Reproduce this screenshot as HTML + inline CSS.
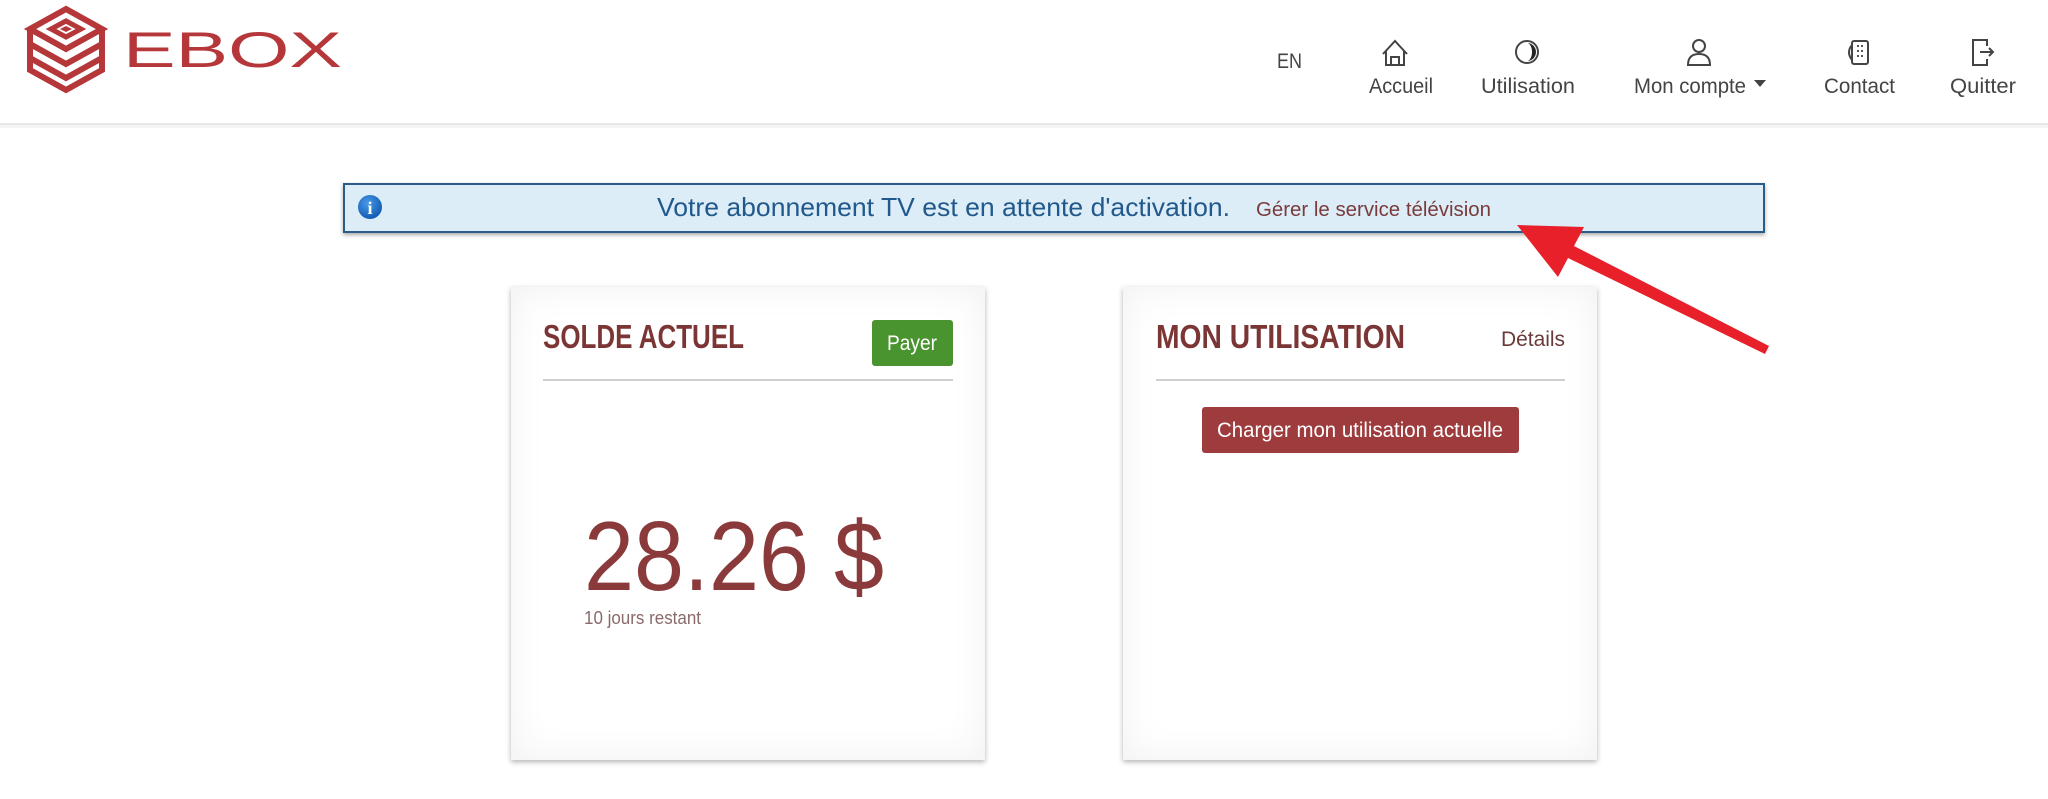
<!DOCTYPE html>
<html><head><meta charset="utf-8"><style>
html,body{margin:0;padding:0;background:#fff;width:2048px;height:799px;overflow:hidden;position:relative}
svg{display:block;position:absolute;left:0;top:0}
text{font-family:"Liberation Sans",sans-serif}
.card{position:absolute;top:287px;width:474px;height:473px;background:#fff;box-shadow:0 2px 5px rgba(0,0,0,.3),inset 0 0 40px rgba(0,0,0,.06)}
</style></head><body>
<div class="card" style="left:511px"></div>
<div class="card" style="left:1123px"></div>
<svg width="2048" height="799" viewBox="0 0 2048 799" xmlns="http://www.w3.org/2000/svg">
<defs>
<filter id="sh" x="-10%" y="-10%" width="120%" height="130%">
<feGaussianBlur in="SourceAlpha" stdDeviation="2"/><feOffset dy="2"/>
<feComponentTransfer><feFuncA type="linear" slope="0.35"/></feComponentTransfer>
<feMerge><feMergeNode/><feMergeNode in="SourceGraphic"/></feMerge></filter>
<radialGradient id="ig" cx="40%" cy="35%" r="70%"><stop offset="0" stop-color="#4a9ae8"/><stop offset="1" stop-color="#0e58b0"/></radialGradient>
</defs>
<!-- header -->
<rect x="0" y="123" width="2048" height="2" fill="#e6e6e6"/>
<rect x="0" y="125" width="2048" height="3" fill="#f4f4f4"/>
<!-- logo -->
<g fill="none" stroke="#b5373a" stroke-width="6" stroke-linejoin="miter">
<polygon points="66,9 102,29 66,49 30,29"/>
<polygon points="66,21 81,29 66,37 51,29" stroke-width="5"/>
<polyline points="30,29 30,44 66,64 102,44 102,29"/>
<polyline points="30,44 30,58 66,78 102,58 102,44"/>
<polyline points="30,58 30,70 66,90 102,70 102,58"/>
</g>
<polygon points="66,26 72,29 66,32 60,29" fill="#b5373a"/>
<text x="123" y="67" font-size="50" fill="#b5373a" textLength="219" lengthAdjust="spacingAndGlyphs">EBOX</text>
<!-- nav -->
<g fill="#444" font-size="21">
<text x="1277" y="68" textLength="25" lengthAdjust="spacingAndGlyphs">EN</text>
<text x="1369" y="93" textLength="64" lengthAdjust="spacingAndGlyphs">Accueil</text>
<text x="1481" y="93" textLength="94" lengthAdjust="spacingAndGlyphs">Utilisation</text>
<text x="1634" y="93" textLength="112" lengthAdjust="spacingAndGlyphs">Mon compte</text>
<text x="1824" y="93" textLength="71" lengthAdjust="spacingAndGlyphs">Contact</text>
<text x="1950" y="93" textLength="66" lengthAdjust="spacingAndGlyphs">Quitter</text>
</g>
<polygon points="1754,80 1766,80 1760,87" fill="#444"/>
<g fill="none" stroke="#444" stroke-width="2">
<path d="M1383,54 L1395,41 L1407,54 M1386,51 V65 H1404 V51 M1391,65 V57 H1399 V65"/>
<circle cx="1527" cy="52" r="11"/>
<circle cx="1699" cy="46" r="6"/>
<path d="M1688,65 Q1688,54 1699,54 Q1710,54 1710,65 Z"/>
<rect x="1852" y="41" width="16" height="23" rx="2"/>
<path d="M1852,45 Q1846,52 1852,60"/>
<path d="M1987,46 V40 H1973 V65 H1987 V59 M1980,52 H1993 M1989,48 L1993,52 L1989,56"/>
</g>
<path d="M1527,43 A9,9 0 0 1 1527,61 A5,9 0 0 0 1527,43 Z" fill="#222"/>
<g fill="#555"><rect x="1857" y="45" width="2" height="2"/><rect x="1861" y="45" width="2" height="2"/><rect x="1857" y="50" width="2" height="2"/><rect x="1861" y="50" width="2" height="2"/><rect x="1857" y="55" width="2" height="2"/><rect x="1861" y="55" width="2" height="2"/></g>
<!-- alert -->
<rect x="344" y="184" width="1420" height="48" fill="#dcedf8" stroke="#2c5c8a" stroke-width="2" filter="url(#sh)"/>
<circle cx="370" cy="207" r="12" fill="url(#ig)"/>
<text x="370" y="214" font-size="18" font-weight="bold" fill="#fff" text-anchor="middle" style="font-family:'Liberation Serif',serif">i</text>
<text x="657" y="216" font-size="26" fill="#22598c" textLength="573" lengthAdjust="spacingAndGlyphs">Votre abonnement TV est en attente d'activation.</text>
<text x="1256" y="216" font-size="20" fill="#7a3b3b" textLength="235" lengthAdjust="spacingAndGlyphs">Gérer le service télévision</text>
<!-- cards content -->
<text x="543" y="348" font-size="33" font-weight="bold" fill="#7b3535" textLength="201" lengthAdjust="spacingAndGlyphs">SOLDE ACTUEL</text>
<rect x="872" y="320" width="81" height="46" rx="3" fill="#4a9430"/>
<text x="912" y="350" font-size="21" fill="#fff" text-anchor="middle" textLength="50" lengthAdjust="spacingAndGlyphs">Payer</text>
<rect x="543" y="379" width="410" height="2" fill="#cfcfcf"/>
<text x="584" y="590" font-size="98" fill="#8b3a3c" textLength="300" lengthAdjust="spacingAndGlyphs">28.26 $</text>
<text x="584" y="624" font-size="18" fill="#8a6a6a" textLength="117" lengthAdjust="spacingAndGlyphs">10 jours restant</text>
<text x="1156" y="348" font-size="33" font-weight="bold" fill="#7b3535" textLength="249" lengthAdjust="spacingAndGlyphs">MON UTILISATION</text>
<text x="1501" y="346" font-size="21" fill="#6b3a3a" textLength="64" lengthAdjust="spacingAndGlyphs">Détails</text>
<rect x="1156" y="379" width="409" height="2" fill="#cfcfcf"/>
<rect x="1202" y="407" width="317" height="46" rx="3" fill="#9e3b3d"/>
<text x="1217" y="437" font-size="21" fill="#fff" textLength="286" lengthAdjust="spacingAndGlyphs">Charger mon utilisation actuelle</text>
<!-- arrow -->
<polygon points="1769,346 1765,354 1568,258 1558,277 1517,225 1584,227 1574,246" fill="#e8202a"/>
</svg>
</body></html>
